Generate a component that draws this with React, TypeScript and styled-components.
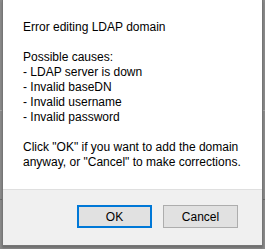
import styled, { createGlobalStyle } from "styled-components";

const GlobalStyle = createGlobalStyle`
    html, body {
        margin: 0;
        padding: 0;
    }
    body {
        font-family: "Liberation Sans", Arial, sans-serif;
    }
`

const Backdrop = styled.div`
    width: 265px;
    height: 249px;
    overflow: hidden;
    background:
        linear-gradient(to bottom, transparent 110px, #a4a4a4 110px, #a4a4a4 111px, transparent 111px),
        linear-gradient(to bottom, transparent 199px, #6c6c6c 199px, #6c6c6c 200px, transparent 200px),
        #8a8a8a;
    padding-left: 2px;
    box-sizing: border-box;
`

const Dialog = styled.div`
    width: 261px;
    height: 246px;
    box-sizing: border-box;
    border: 1px solid #767676;
    border-top: none;
    background: #ffffff;
    display: flex;
    flex-direction: column;
    box-shadow: 0 2px 2px rgba(0, 0, 0, 0.2);
`

const Message = styled.div`
    flex: 1;
    padding: 20px 0 0 20px;
    font-size: 12px;
    line-height: 15px;
    color: #000;
    white-space: pre;
`

const Footer = styled.div`
    height: 56px;
    box-sizing: border-box;
    background: #f0f0f0;
    border-top: 1px solid #dfdfdf;
    display: flex;
    justify-content: flex-end;
    align-items: flex-start;
    gap: 11px;
    padding: 15px 24px 0 0;
`

const Button = styled.button<{ focused?: boolean }>`
    width: 75px;
    height: 23px;
    box-sizing: border-box;
    background: #e1e1e1;
    border: ${props => props.focused ? "2px solid #0078d7" : "1px solid #adadad"};
    font-family: "Liberation Sans", Arial, sans-serif;
    font-size: 12px;
    color: #000;
    padding: 0;
    margin: 0;
`

const message = `Error editing LDAP domain

Possible causes:
- LDAP server is down
- Invalid baseDN
- Invalid username
- Invalid password

Click "OK" if you want to add the domain
anyway, or "Cancel" to make corrections.`

export default function App() {
    return <>
        <GlobalStyle />
        <Backdrop>
            <Dialog>
                <Message>{message}</Message>
                <Footer>
                    <Button type="button" focused>OK</Button>
                    <Button type="button">Cancel</Button>
                </Footer>
            </Dialog>
        </Backdrop>
    </>
}
